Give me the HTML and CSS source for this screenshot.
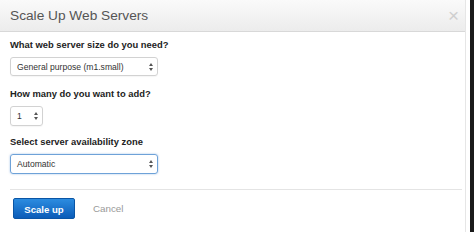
FILE: index.html
```html
<!DOCTYPE html>
<html lang="en">
<head>
    <meta charset="UTF-8">
    <title>Scale Up Web Servers</title>
    <link rel="stylesheet" href="styles.css">
</head>
<body>
    <div class="modal">
        <div class="modal_head">
            <h3>Scale Up Web Servers</h3>
            <span class="close">&times;</span>
        </div>
        <div class="modal_body">
            <label>What web server size do you need?</label>
            <div class="select wide"><span>General purpose (m1.small)</span><i></i></div>
            <label>How many do you want to add?</label>
            <div class="select small"><span>1</span><i></i></div>
            <label>Select server availability zone</label>
            <div class="select wide focus"><span>Automatic</span><i></i></div>
        </div>
        <div class="modal_foot">
            <a class="btn">Scale up</a>
            <a class="cancel">Cancel</a>
        </div>
    </div>
    <div class="edge"></div>
</body>
</html>
```

FILE: styles.css
```css
body,div,h3,label,a { margin:0; padding:0; }
body { width:474px; height:232px; overflow:hidden; display:flex; background:#fff; font-family:"Liberation Sans", Arial, sans-serif; color:#333; }
.modal { width:465px; border-right:1px solid #e6e6e6; }
.modal_head { height:31px; display:flex; align-items:center; justify-content:space-between; padding:0 10px; background:linear-gradient(#fafafa,#ececec); border-bottom:1px solid #d8d8d8; }
.modal_head h3 { font-size:13.7px; font-weight:normal; color:#555; }
.close { font-size:19px; color:#cfcfcf; margin-right:-4px; }
.modal_body { padding:7px 10px 0; display:flex; flex-direction:column; align-items:flex-start; }
.modal_body label { font-size:9.4px; line-height:12px; font-weight:bold; color:#222; margin-bottom:6px; }
.select { height:20px; display:flex; align-items:center; justify-content:space-between; padding:0 4px 0 6px; box-sizing:border-box; border:1px solid #d2d2d2; border-radius:3px; font-size:8.6px; color:#333; margin-bottom:12px; box-shadow:0 1px 1px rgba(0,0,0,0.04); }
.select.wide { width:148px; }
.select.small { width:33px; margin-bottom:10px; }
.select.focus { border-color:#6ea2d8; box-shadow:0 0 2px rgba(80,140,210,0.6); }
.modal_body .select:first-of-type { height:19px; }
.select i { width:4px; height:8px; position:relative; }
.select i:before,.select i:after { content:""; position:absolute; left:0; border-left:2px solid transparent; border-right:2px solid transparent; }
.select i:before { top:0; border-bottom:3px solid #555; }
.select i:after { bottom:0; border-top:3px solid #555; }
.modal_foot { margin:3px 3px 0 10px; border-top:1px solid #e4e4e4; padding:8px 0 0 3px; display:flex; align-items:center; }
.btn { width:62px; height:21px; line-height:21px; box-sizing:border-box; text-align:center; font-size:9.6px; font-weight:bold; color:#fff; background:linear-gradient(#2c8ce0,#0b5cb8); border:1px solid #0a55a5; border-radius:2px; }
.cancel { margin-left:18px; font-size:9.8px; color:#999; }
.edge { flex:1; background:#1a1a1a; margin-left:4px; }
```
